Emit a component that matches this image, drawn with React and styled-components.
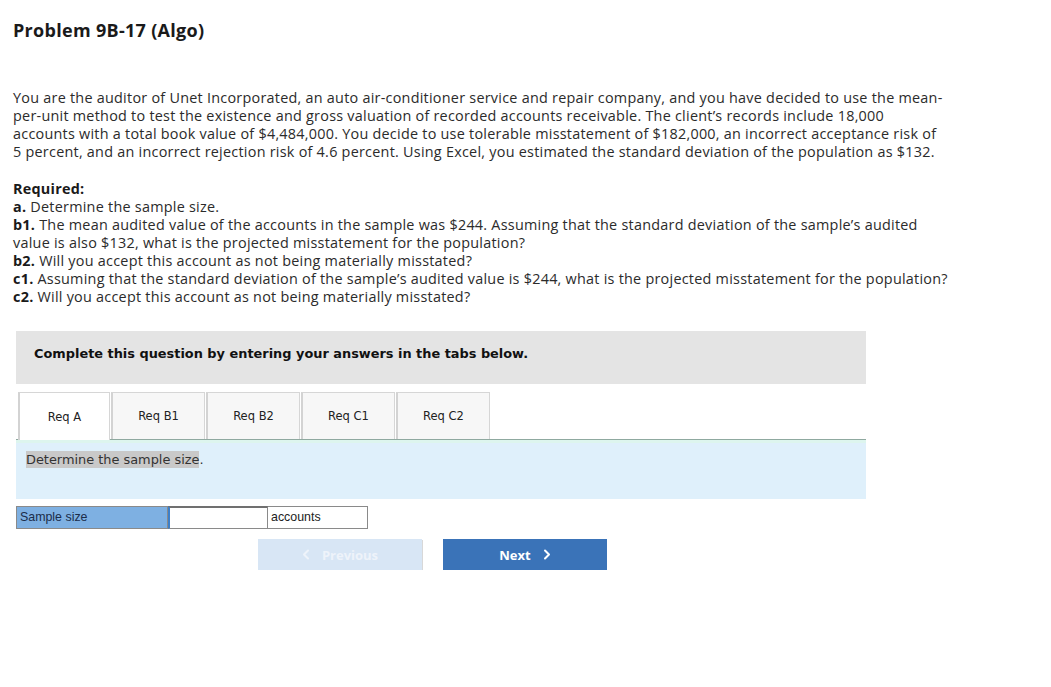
import React from "react";
import styled, { createGlobalStyle } from "styled-components";

const Global = createGlobalStyle`
  html, body { margin: 0; padding: 0; background: #fff; }
  body { font-family: "Open Sans", "Lato", sans-serif; color: #222; }
`;

const Page = styled.div`
  padding: 20px 13px 0 13px;
  width: 1051px;
  box-sizing: border-box;
`;

const Title = styled.h1`
  margin: 0;
  font-family: "Open Sans", sans-serif;
  font-weight: 700;
  font-size: 18px;
  letter-spacing: 0.3px;
  line-height: 20px;
  color: #1a1a1a;
`;

const Para = styled.p`
  margin: ${(p) => p.$mt || 0}px 0 0 0;
  font-size: 14.4px;
  letter-spacing: 0.25px;
  line-height: 18px;
  width: 1000px;
  color: #2b2b2b;
  white-space: nowrap;
`;

const Req = styled.div`
  margin-top: 19px;
  font-size: 14.4px;
  letter-spacing: 0.25px;
  line-height: 18px;
  color: #2b2b2b;
  width: 1000px;
  white-space: nowrap;
  b { font-weight: 700; color: #1a1a1a; }
`;

const Question = styled.div`
  margin: 25px 0 0 3px;
  width: 850px;
`;

const Banner = styled.div`
  background: #e4e4e4;
  height: 53px;
  box-sizing: border-box;
  display: flex;
  align-items: center;
  padding: 0 0 8px 18px;
  font-family: "DejaVu Sans", Verdana, sans-serif;
  font-weight: 700;
  font-size: 12.9px;
  color: #111;
`;

const Tabs = styled.div`
  display: flex;
  margin-top: 8px;
  padding-left: 2px;
  border-bottom: 1px solid #8fa9a0;
  gap: 1px;
`;

const Tab = styled.div`
  width: ${(p) => p.$w}px;
  box-sizing: border-box;
  display: flex;
  align-items: center;
  justify-content: center;
  font-family: "DejaVu Sans", Verdana, sans-serif;
  font-size: 11.5px;
  color: #222;
  background: ${(p) => (p.$active ? "#fff" : "#f7f7f7")};
  border: 1px solid #d6d6d6;
  border-left: 2px solid #d3d3d3;
  border-bottom: none;
  margin-bottom: ${(p) => (p.$active ? "-1px" : "0")};
  height: ${(p) => (p.$active ? "48px" : "47px")};
`;

const Content = styled.div`
  background: #dff0fb;
  border-top: 3px solid #ddf5ee;
  height: 59px;
  padding: 9px 0 0 10px;
  box-sizing: border-box;
  font-family: "DejaVu Sans", Verdana, sans-serif;
  font-size: 12.9px;
  color: #333;
`;

const Prompt = styled.span`
  background: #c9c9c9;
  padding: 1px 0;
`;

const Row = styled.div`
  display: flex;
  margin-top: 7px;
  height: 23px;
  font-family: "Liberation Sans", Arial, sans-serif;
  font-size: 12.4px;
`;

const LabelCell = styled.div`
  width: 152px;
  box-sizing: border-box;
  background: #7eb0e2;
  border: 1px solid #8a8a8a;
  color: #1b2d4a;
  padding: 3px 0 0 3px;
`;

const InputCell = styled.input`
  width: 100px;
  box-sizing: border-box;
  border: 1px solid #8a8a8a;
  border-top: 2px solid #707070;
  border-left: 2px solid #3d7fc8;
  background: #fff;
  margin: 0;
  padding: 0;
  outline: none;
`;

const UnitCell = styled.div`
  width: 100px;
  box-sizing: border-box;
  border: 1px solid #8a8a8a;
  border-left: none;
  background: #fff;
  color: #222;
  padding: 3px 0 0 3px;
`;

const Buttons = styled.div`
  display: flex;
  gap: 21px;
  margin: 10px 0 0 242px;
`;

const Btn = styled.button`
  width: 164px;
  height: 31px;
  border: none;
  font-family: "Open Sans", sans-serif;
  font-weight: 700;
  font-size: 13px;
  display: flex;
  align-items: center;
  justify-content: center;
  gap: 12px;
  padding: 0;
  background: ${(p) => (p.$primary ? "#3a73b8" : "#d8e6f5")};
  color: ${(p) => (p.$primary ? "#fff" : "#eef3fa")};
  box-shadow: ${(p) => (p.$primary ? "none" : "1px 1px 0 #d8d8d8")};
`;

const Chevron = ({ left }) => (
  <svg width="8" height="11" viewBox="0 0 8 11" fill="none">
    <path
      d={left ? "M6 1.5L2 5.5l4 4" : "M2 1.5l4 4-4 4"}
      stroke="currentColor"
      strokeWidth="2"
      strokeLinecap="round"
      strokeLinejoin="round"
    />
  </svg>
);

const tabs = [
  ["Req A", 92],
  ["Req B1", 94],
  ["Req B2", 94],
  ["Req C1", 94],
  ["Req C2", 94],
];

export default function App() {
  return (
    <>
      <Global />
      <Page>
        <Title>Problem 9B-17 (Algo)</Title>
        <Para $mt={49}>
          You are the auditor of Unet Incorporated, an auto air-conditioner service and repair company, and you have decided to use the mean-
          <br />
          per-unit method to test the existence and gross valuation of recorded accounts receivable. The client’s records include 18,000
          <br />
          accounts with a total book value of $4,484,000. You decide to use tolerable misstatement of $182,000, an incorrect acceptance risk of
          <br />
          5 percent, and an incorrect rejection risk of 4.6 percent. Using Excel, you estimated the standard deviation of the population as $132.
        </Para>
        <Req>
          <b>Required:</b>
          <br />
          <b>a.</b> Determine the sample size.
          <br />
          <b>b1.</b> The mean audited value of the accounts in the sample was $244. Assuming that the standard deviation of the sample’s audited
          <br />
          value is also $132, what is the projected misstatement for the population?
          <br />
          <b>b2.</b> Will you accept this account as not being materially misstated?
          <br />
          <b>c1.</b> Assuming that the standard deviation of the sample’s audited value is $244, what is the projected misstatement for the population?
          <br />
          <b>c2.</b> Will you accept this account as not being materially misstated?
        </Req>
        <Question>
          <Banner>Complete this question by entering your answers in the tabs below.</Banner>
          <Tabs>
            {tabs.map(([t, w], i) => (
              <Tab key={t} $w={w} $active={i === 0}>
                {t}
              </Tab>
            ))}
          </Tabs>
          <Content>
            <Prompt>Determine the sample size</Prompt>.
          </Content>
          <Row>
            <LabelCell>Sample size</LabelCell>
            <InputCell />
            <UnitCell>accounts</UnitCell>
          </Row>
          <Buttons>
            <Btn>
              <Chevron left />
              <span>Previous</span>
            </Btn>
            <Btn $primary>
              <span>Next</span>
              <Chevron />
            </Btn>
          </Buttons>
        </Question>
      </Page>
    </>
  );
}
